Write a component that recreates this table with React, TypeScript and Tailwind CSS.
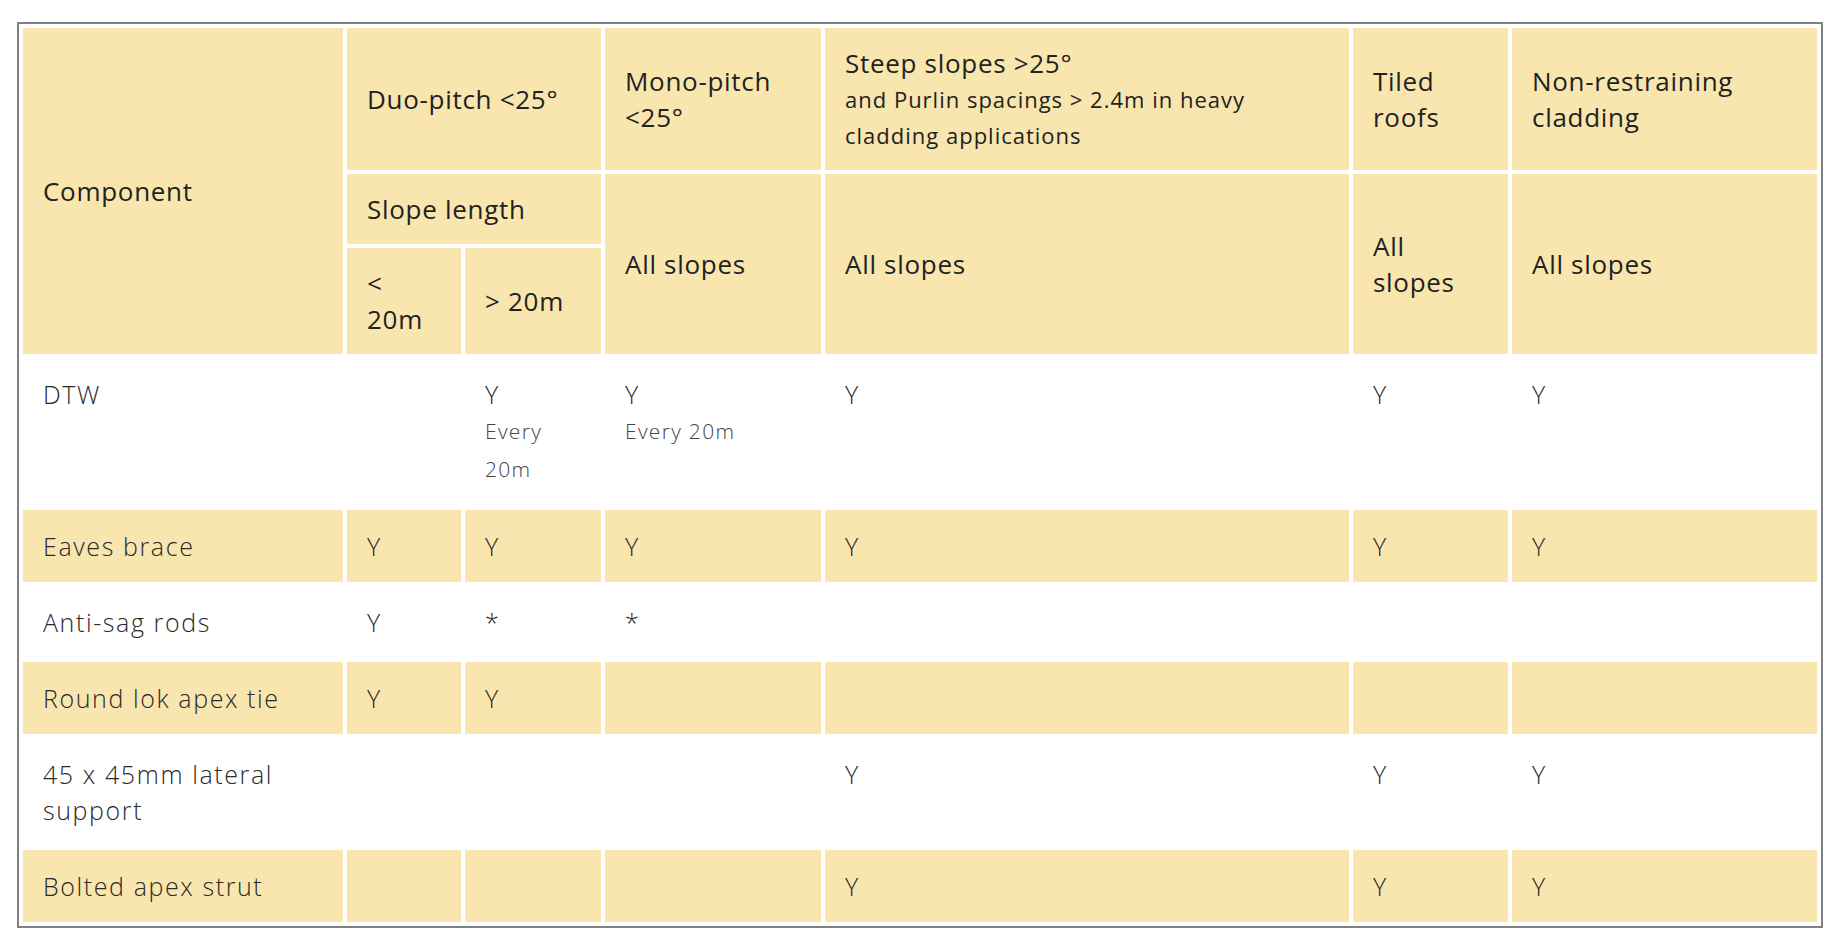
import React from "react";

const font = { fontFamily: "'Open Sans', 'Noto Sans', sans-serif" };

type Cell = { y?: string; note?: string };

const rows: { label: string; yellow: boolean; cells: Cell[] }[] = [
  {
    label: "DTW",
    yellow: false,
    cells: [{}, { y: "Y", note: "Every 20m" }, { y: "Y", note: "Every 20m" }, { y: "Y" }, { y: "Y" }, { y: "Y" }],
  },
  { label: "Eaves brace", yellow: true, cells: [{ y: "Y" }, { y: "Y" }, { y: "Y" }, { y: "Y" }, { y: "Y" }, { y: "Y" }] },
  { label: "Anti-sag rods", yellow: false, cells: [{ y: "Y" }, { y: "*" }, { y: "*" }, {}, {}, {}] },
  { label: "Round lok apex tie", yellow: true, cells: [{ y: "Y" }, { y: "Y" }, {}, {}, {}, {}] },
  { label: "45 x 45mm lateral support", yellow: false, cells: [{}, {}, {}, { y: "Y" }, { y: "Y" }, { y: "Y" }] },
  { label: "Bolted apex strut", yellow: true, cells: [{}, {}, {}, { y: "Y" }, { y: "Y" }, { y: "Y" }] },
];

const th =
  "bg-[#f8e6ae] text-left align-middle font-normal text-[#222222] text-[26px] leading-[36px] tracking-[0.7px] px-[20px] py-[17px]";

export default function App() {
  return (
    <div className="bg-white w-[1844px] h-[945px] pt-[22px] pl-[17px]" style={font}>
      <table className="w-[1806px] table-fixed border-separate border-spacing-[4px] border-2 border-solid border-[#808080]">
        <colgroup>
          <col className="w-[320px]" />
          <col className="w-[114px]" />
          <col className="w-[136px]" />
          <col className="w-[216px]" />
          <col className="w-[524px]" />
          <col className="w-[155px]" />
          <col className="w-[305px]" />
        </colgroup>
        <thead>
          <tr>
            <th rowSpan={3} className={th}>Component</th>
            <th colSpan={2} className={th}>Duo-pitch &lt;25°</th>
            <th className={th}>Mono-pitch &lt;25°</th>
            <th className={th}>
              <div>Steep slopes &gt;25°</div>
              <div className="text-[22px] leading-[36px] tracking-[1px]">
                and Purlin spacings &gt; 2.4m in heavy cladding applications
              </div>
            </th>
            <th className={th}>Tiled roofs</th>
            <th className={th}>Non-restraining cladding</th>
          </tr>
          <tr>
            <th colSpan={2} className={th}>Slope length</th>
            <th rowSpan={2} className={th}>All slopes</th>
            <th rowSpan={2} className={th}>All slopes</th>
            <th rowSpan={2} className={th}>All slopes</th>
            <th rowSpan={2} className={th}>All slopes</th>
          </tr>
          <tr>
            <th className={th}>&lt; 20m</th>
            <th className={th}>&gt; 20m</th>
          </tr>
        </thead>
        <tbody>
          {rows.map((r) => (
            <tr key={r.label}>
              <td
                className={`${r.yellow ? "bg-[#f8e6ae]" : "bg-white"} align-top px-[20px] py-[18px] text-[25px] leading-[36px] font-light tracking-[1.6px] text-[#2a2a2a]`}
              >
                {r.label}
              </td>
              {r.cells.map((c, i) => (
                <td
                  key={i}
                  className={`${r.yellow ? "bg-[#f8e6ae]" : "bg-white"} align-top px-[20px] py-[18px] text-[25px] leading-[36px] font-light text-[#2a2a2a]`}
                >
                  {c.y && <div>{c.y}</div>}
                  {c.note && (
                    <div className="text-[21px] leading-[38px] text-[#444444] tracking-[1.3px]">{c.note}</div>
                  )}
                </td>
              ))}
            </tr>
          ))}
        </tbody>
      </table>
    </div>
  );
}
